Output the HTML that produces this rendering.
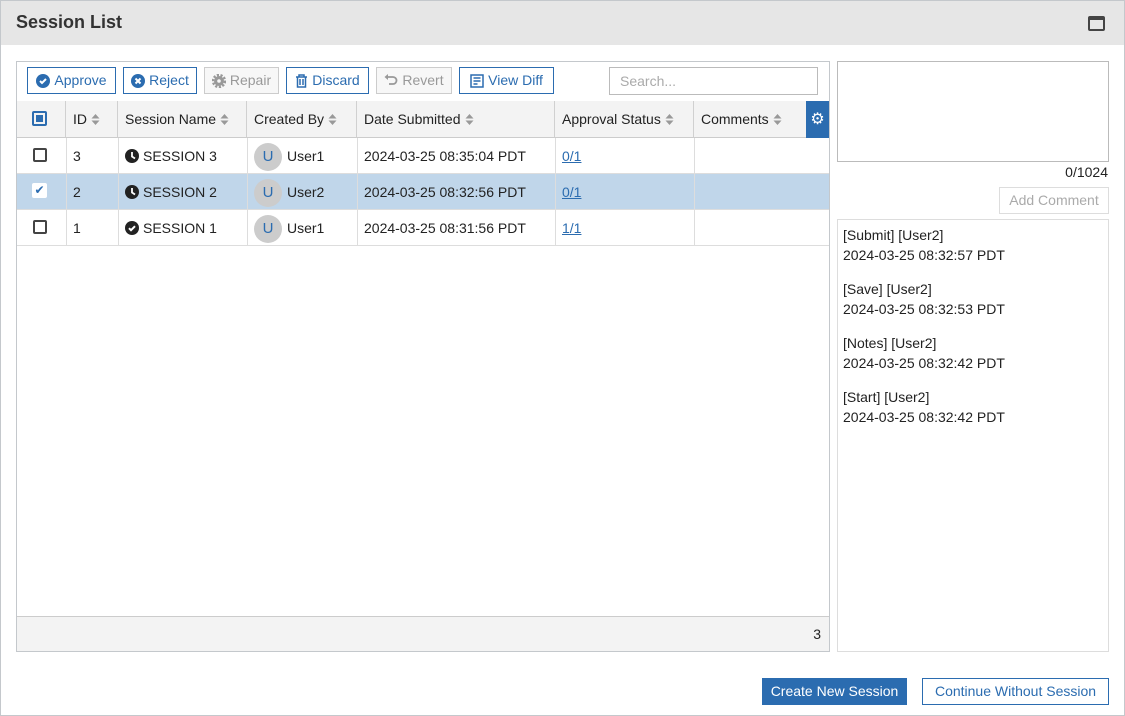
<!DOCTYPE html><html><head><style>
*{box-sizing:border-box;margin:0;padding:0}
body{width:1125px;height:716px;font-family:"Liberation Sans",sans-serif;font-size:14px;color:#222;background:#fff;position:relative;overflow:hidden}
.a{position:absolute}
.outer{left:0;top:0;width:1125px;height:716px;border:1px solid #c4c8cc}
.hdr{left:1px;top:1px;width:1123px;height:44px;background:#e6e6e6}
.btn{position:absolute;top:67px;height:27px;border:1px solid #2b6cb0;color:#2b6cb0;font-size:14px;line-height:25px;display:flex;align-items:center;justify-content:center;gap:4px}
.dis{border-color:#ccc;color:#999;background:#f7f7f7}
.th{position:absolute;top:101px;height:37px;background:#f3f3f3;border-bottom:1px solid #ccc;border-right:1px solid #d0d0d0;line-height:36px;padding-left:7px}
.td{position:absolute;height:36px;border-bottom:1px solid #ddd;border-right:1px solid #ddd;line-height:36px;padding-left:7px}
.s{display:inline-block;width:9px;height:13px;vertical-align:-2px;margin-left:2px}
.cb{position:absolute;width:14px;height:14px;border:2px solid #444;border-radius:2px}
.av{display:inline-block;width:28px;height:28px;border-radius:50%;background:#ccc;color:#2b6cb0;text-align:center;line-height:28px;vertical-align:middle;margin-left:0;margin-right:5px;font-size:15px}
.lk{color:#2b6cb0;text-decoration:underline}
.ic{vertical-align:-2px;margin-right:4px}
</style></head><body>
<svg width="0" height="0" style="position:absolute"><defs>
<g id="sort"><path d="M0.5 5.5L4.5 1 8.5 5.5z M0.5 7.5L4.5 12 8.5 7.5z" fill="#999"/></g>
<g id="clk"><circle cx="7" cy="7" r="7" fill="#222"/><path d="M7 3v4.5l3 2" stroke="#fff" stroke-width="1.8" fill="none"/></g>
<g id="chk"><circle cx="7" cy="7" r="7" fill="#222"/><path d="M4 7.2l2 2 4-4" stroke="#fff" stroke-width="2" fill="none"/></g>
</defs></svg>
<div class="a outer"></div><div class="a hdr"></div>
<div class="a" style="left:16px;top:12px;font-size:18px;font-weight:bold;color:#333">Session List</div>
<div class="a" style="left:1088px;top:16px;width:17px;height:15px;border:2px solid #444;border-top-width:4px;border-radius:2px"></div>
<div class="a" style="left:16px;top:61px;width:814px;height:591px;border:1px solid #c4c8cc"></div>
<div class="btn" style="left:27px;width:89px"><svg width="14" height="14"><circle cx="7" cy="7" r="7" fill="#2b6cb0"/><path d="M4 7l2 2 4-4" stroke="#fff" stroke-width="2" fill="none"/></svg>Approve</div>
<div class="btn" style="left:123px;width:74px"><svg width="14" height="14"><circle cx="7" cy="7" r="7" fill="#2b6cb0"/><path d="M4.5 4.5l5 5M9.5 4.5l-5 5" stroke="#fff" stroke-width="2"/></svg>Reject</div>
<div class="btn dis" style="left:204px;width:75px"><svg width="14" height="14"><circle cx="7" cy="7" r="5" fill="#999"/><circle cx="7" cy="7" r="6" fill="none" stroke="#999" stroke-width="2.4" stroke-dasharray="2.2 1.5"/><circle cx="7" cy="7" r="1.8" fill="#f7f7f7"/></svg>Repair</div>
<div class="btn" style="left:286px;width:83px"><svg width="13" height="14"><path d="M1 3h11M4 3V1h5v2M2.5 3v10h8V3M5 5v6M8 5v6" stroke="#2b6cb0" stroke-width="1.5" fill="none"/></svg>Discard</div>
<div class="btn dis" style="left:376px;width:76px"><svg width="14" height="13"><path d="M3 3h6a3.5 3.5 0 010 7H5" stroke="#999" stroke-width="1.8" fill="none"/><path d="M0.5 3L4 0v6z" fill="#999"/></svg>Revert</div>
<div class="btn" style="left:459px;width:95px"><svg width="14" height="14"><path d="M1 1h12v12H1zM3.5 4h7M3.5 7h7M3.5 10h4" stroke="#2b6cb0" stroke-width="1.5" fill="none"/></svg>View Diff</div>
<div class="a" style="left:609px;top:67px;width:209px;height:28px;border:1px solid #bbb;color:#aaa;padding-left:10px;line-height:26px">Search...</div>
<div class="th" style="left:17px;width:49px"></div>
<div class="a" style="left:32px;top:111px;width:15px;height:15px;border:2px solid #2b6cb0;border-radius:2px"><div style="margin:2px;width:7px;height:7px;background:#2b6cb0"></div></div>
<div class="th" style="left:66px;width:52px">ID<svg class="s" style="margin-left:4px"><use href="#sort"/></svg></div>
<div class="th" style="left:118px;width:129px">Session Name<svg class="s" style="margin-left:4px"><use href="#sort"/></svg></div>
<div class="th" style="left:247px;width:110px">Created By<svg class="s" style="margin-left:4px"><use href="#sort"/></svg></div>
<div class="th" style="left:357px;width:198px">Date Submitted<svg class="s" style="margin-left:4px"><use href="#sort"/></svg></div>
<div class="th" style="left:555px;width:139px">Approval Status<svg class="s" style="margin-left:4px"><use href="#sort"/></svg></div>
<div class="th" style="left:694px;width:112px;border-right:0">Comments<svg class="s" style="margin-left:4px"><use href="#sort"/></svg></div>
<div class="a" style="left:806px;top:101px;width:23px;height:37px;background:#2b6cb0;color:#fff;text-align:center;line-height:37px;font-size:16px">⚙</div>
<div class="a" style="left:17px;top:174px;width:812px;height:36px;background:#c0d6ea"></div>
<div class="td" style="left:17px;top:138px;width:50px"></div><div class="cb" style="left:33px;top:148px"></div>
<div class="td" style="left:66px;top:138px;width:53px">3</div>
<div class="td" style="left:118px;top:138px;width:130px"><svg class="ic" width="14" height="14"><use href="#clk"/></svg>SESSION 3</div>
<div class="td" style="left:247px;top:138px;width:111px"><span class="av">U</span>User1</div>
<div class="td" style="left:357px;top:138px;width:199px">2024-03-25 08:35:04 PDT</div>
<div class="td" style="left:555px;top:138px;width:140px"><span class="lk">0/1</span></div>
<div class="td" style="left:694px;top:138px;width:135px;border-right:0"></div>
<div class="td" style="left:17px;top:174px;width:50px"></div><div class="a" style="left:32px;top:183px;width:15px;height:15px;background:#fff;border-radius:2px;color:#2b6cb0;font-size:12px;text-align:center;line-height:15px">✔</div>
<div class="td" style="left:66px;top:174px;width:53px">2</div>
<div class="td" style="left:118px;top:174px;width:130px"><svg class="ic" width="14" height="14"><use href="#clk"/></svg>SESSION 2</div>
<div class="td" style="left:247px;top:174px;width:111px"><span class="av">U</span>User2</div>
<div class="td" style="left:357px;top:174px;width:199px">2024-03-25 08:32:56 PDT</div>
<div class="td" style="left:555px;top:174px;width:140px"><span class="lk">0/1</span></div>
<div class="td" style="left:694px;top:174px;width:135px;border-right:0"></div>
<div class="td" style="left:17px;top:210px;width:50px"></div><div class="cb" style="left:33px;top:220px"></div>
<div class="td" style="left:66px;top:210px;width:53px">1</div>
<div class="td" style="left:118px;top:210px;width:130px"><svg class="ic" width="14" height="14"><use href="#chk"/></svg>SESSION 1</div>
<div class="td" style="left:247px;top:210px;width:111px"><span class="av">U</span>User1</div>
<div class="td" style="left:357px;top:210px;width:199px">2024-03-25 08:31:56 PDT</div>
<div class="td" style="left:555px;top:210px;width:140px"><span class="lk">1/1</span></div>
<div class="td" style="left:694px;top:210px;width:135px;border-right:0"></div>
<div class="a" style="left:17px;top:616px;width:812px;height:35px;background:#f3f3f3;border-top:1px solid #ccc;text-align:right;padding-right:8px;line-height:34px">3</div>
<div class="a" style="left:837px;top:61px;width:272px;height:101px;border:1px solid #bbb"></div>
<div class="a" style="left:1000px;top:162px;width:108px;text-align:right;line-height:20px">0/1024</div>
<div class="a" style="left:999px;top:187px;width:110px;height:27px;border:1px solid #ddd;color:#aaa;text-align:center;line-height:25px">Add Comment</div>
<div class="a" style="left:837px;top:219px;width:272px;height:433px;border:1px solid #ddd;padding:5px 5px;line-height:20px">
[Submit] [User2]<br>2024-03-25 08:32:57 PDT<div style="height:14px"></div>[Save] [User2]<br>2024-03-25 08:32:53 PDT<div style="height:14px"></div>[Notes] [User2]<br>2024-03-25 08:32:42 PDT<div style="height:14px"></div>[Start] [User2]<br>2024-03-25 08:32:42 PDT</div>
<div class="a" style="left:762px;top:678px;width:145px;height:27px;background:#2b6cb0;color:#fff;text-align:center;line-height:27px">Create New Session</div>
<div class="a" style="left:922px;top:678px;width:187px;height:27px;border:1px solid #2b6cb0;color:#2b6cb0;text-align:center;line-height:25px">Continue Without Session</div>
</body></html>
